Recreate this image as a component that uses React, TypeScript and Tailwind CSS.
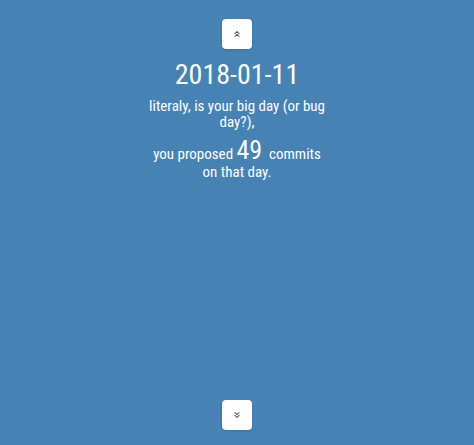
import React from 'react';
import { ChevronsUp, ChevronsDown } from 'lucide-react';

const NavButton: React.FC<{ dir: 'up' | 'down' }> = ({ dir }) => (
  <button className="flex h-[30px] w-[30px] items-center justify-center rounded-[4px] bg-white shadow-sm">
    {dir === 'up' ? (
      <ChevronsUp className="h-[10px] w-[10px] text-gray-600" strokeWidth={2.5} />
    ) : (
      <ChevronsDown className="h-[10px] w-[10px] text-gray-600" strokeWidth={2.5} />
    )}
  </button>
);

export default function App() {
  return (
    <div className="flex h-[445px] w-full flex-col items-center bg-[#4682b4] font-['Roboto_Condensed','Roboto',sans-serif] text-white">
      <div className="mt-[19px]">
        <NavButton dir="up" />
      </div>
      <h1 className="mt-[10px] text-[28px] leading-[32px] font-normal">2018-01-11</h1>
      <p className="mt-[7px] w-[178px] text-center text-[15px] leading-[16px]">
        literaly, is your big day (or bug day?),
      </p>
      <p className="mt-[7px] w-[178px] text-center text-[15px] leading-[18px]">
        you proposed <span className="text-[26px] leading-none">49</span>&nbsp; commits on that day.
      </p>
      <div className="mt-auto mb-[15px]">
        <NavButton dir="down" />
      </div>
    </div>
  );
}
